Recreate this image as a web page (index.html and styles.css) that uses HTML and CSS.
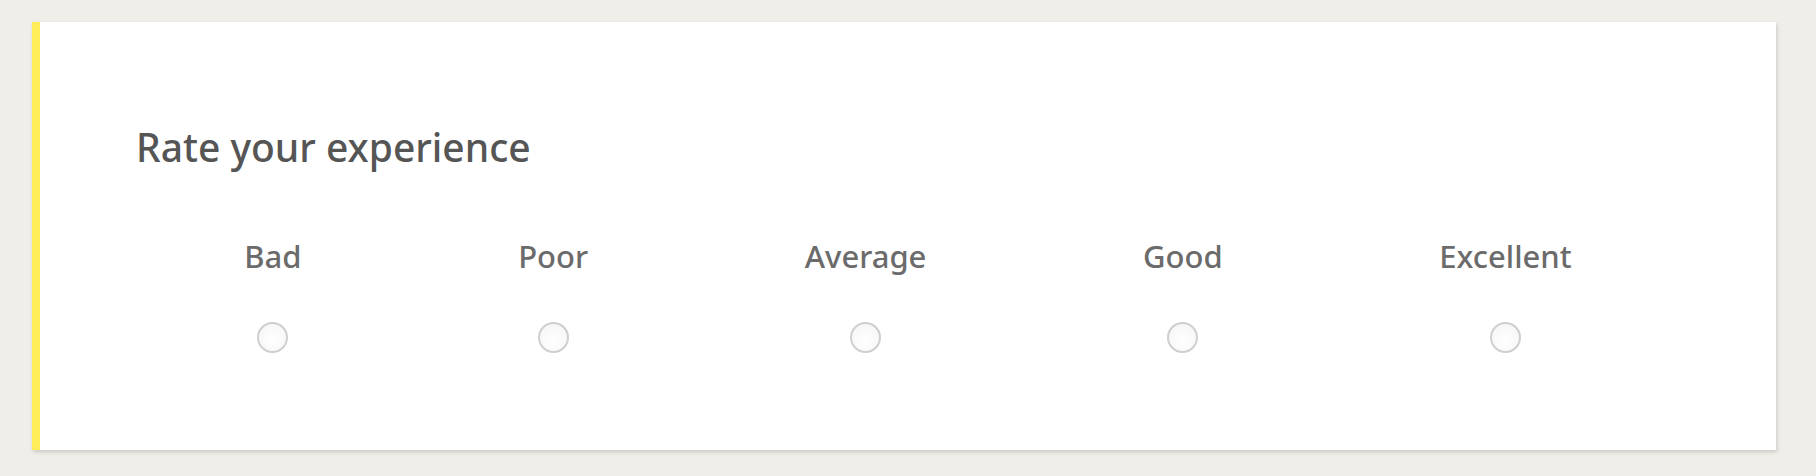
FILE: index.html
```html
<!DOCTYPE html>
<html lang="en">
<head>
  <meta charset="UTF-8">
  <meta name="viewport" content="width=device-width, initial-scale=1.0">
  <title>Rate your experience</title>
  <link rel="stylesheet" href="styles.css">
</head>
<body>
  <div class="card">
    <h2 class="question">Rate your experience</h2>
    <div class="scale">
      <label class="option">
        <span class="option-label">Bad</span>
        <input type="radio" name="rating" value="1">
      </label>
      <label class="option">
        <span class="option-label">Poor</span>
        <input type="radio" name="rating" value="2">
      </label>
      <label class="option">
        <span class="option-label">Average</span>
        <input type="radio" name="rating" value="3">
      </label>
      <label class="option">
        <span class="option-label">Good</span>
        <input type="radio" name="rating" value="4">
      </label>
      <label class="option">
        <span class="option-label">Excellent</span>
        <input type="radio" name="rating" value="5">
      </label>
    </div>
  </div>
</body>
</html>
```

FILE: styles.css
```css
body, html {
  margin: 0;
  padding: 0;
  height: 100%;
  font-family: 'Noto Sans', 'Open Sans', sans-serif;
  background: #efeee9;
}

body {
  padding: 22px 40px 0 32px;
  box-sizing: border-box;
}

.card {
  background: #fff;
  border-left: 8px solid #ffee58;
  padding: 101px 96px 97px 96px;
  box-shadow: 1px 2px 4px rgba(0, 0, 0, 0.16);
}

.question {
  margin: 0;
  font-size: 39px;
  line-height: 48px;
  font-weight: 500;
  color: #555;
}

.scale {
  display: flex;
  margin-top: 67px;
}

.option {
  flex: 1 1 auto;
  display: flex;
  flex-direction: column;
  align-items: center;
  cursor: pointer;
}

.option-label {
  font-size: 31px;
  line-height: 36px;
  font-weight: 500;
  color: #6b6b6b;
}

.option input {
  appearance: none;
  -webkit-appearance: none;
  margin: 48px 0 0;
  width: 31px;
  height: 31px;
  border-radius: 50%;
  border: 2px solid #cfcfcf;
  background: radial-gradient(circle at 50% 60%, #fff 0%, #f4f4f4 100%);
  box-sizing: border-box;
  cursor: pointer;
}

.option input:checked {
  background: #ffee58;
  border-color: #e0cf3a;
}
```
